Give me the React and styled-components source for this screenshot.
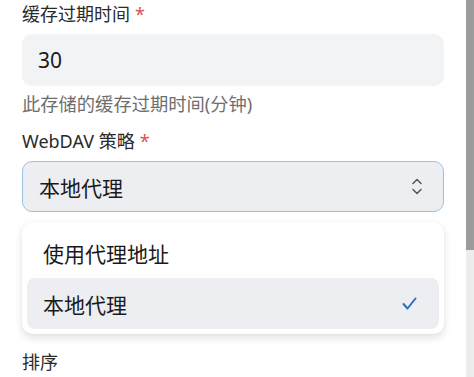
import styled, { createGlobalStyle } from "styled-components";

const GlobalStyle = createGlobalStyle`
  html, body {
    margin: 0;
    padding: 0;
    background: #ffffff;
    overflow: hidden;
  }
  body {
    font-family: "Noto Sans", "Noto Sans CJK SC", sans-serif;
    color: #1f1f1f;
  }
`;

const Page = styled.div`
  display: flex;
  width: 474px;
  height: 377px;
  overflow: hidden;
`;

const Main = styled.div`
  flex: 1;
  display: flex;
  flex-direction: column;
  padding: 2px 22px 0 22px;
`;

const Scrollbar = styled.div`
  width: 8px;
  display: flex;
  flex-direction: column;
  background: #ededed;
`;

const Thumb = styled.div`
  height: 250px;
  background: #9b9b9b;
`;

const Label = styled.div`
  font-size: 18px;
  line-height: 24px;
  color: #2a2a2a;
  margin-top: ${(p) => p.$mt || 0}px;
`;

const Star = styled.span`
  color: #d9534f;
  margin-left: 5px;
`;

const Input = styled.div`
  margin-top: 8px;
  height: 52px;
  box-sizing: border-box;
  display: flex;
  align-items: center;
  padding: 0 16px;
  border-radius: 10px;
  background: #f2f3f5;
  font-size: 21px;
  color: #1a1a1a;
`;

const Help = styled.div`
  margin-top: 6px;
  font-size: 18.3px;
  line-height: 24px;
  color: #6e6e6e;
`;

const Select = styled.div`
  margin-top: 8px;
  height: 51px;
  box-sizing: border-box;
  display: flex;
  align-items: center;
  justify-content: space-between;
  padding: 0 20px 0 16px;
  border-radius: 10px;
  border: 1.5px solid #9cc2e2;
  background: #eceef1;
  font-size: 21px;
  color: #1a1a1a;
`;

const Menu = styled.div`
  margin-top: 10px;
  padding: 5px;
  border-radius: 10px;
  background: #ffffff;
  box-shadow: 0 4px 8px rgba(0, 0, 0, 0.12), 0 0 1px rgba(0, 0, 0, 0.1);
  display: flex;
  flex-direction: column;
`;

const Option = styled.div`
  height: 51px;
  display: flex;
  align-items: center;
  justify-content: space-between;
  padding: 0 22px 0 16px;
  border-radius: 8px;
  font-size: 21px;
  color: #1a1a1a;
  background: ${(p) => (p.$active ? "#eceef1" : "transparent")};
`;

const ChevronsIcon = () => (
  <svg width="12" height="17" viewBox="0 0 12 17" fill="none" stroke="#555" strokeWidth="1.5" strokeLinecap="round" strokeLinejoin="round">
    <path d="M2 5.5 6 1.5 10 5.5" />
    <path d="M2 11.5 6 15.5 10 11.5" />
  </svg>
);

const CheckIcon = () => (
  <svg width="15" height="13" viewBox="0 0 15 13" fill="none" stroke="#2f6fb8" strokeWidth="2" strokeLinecap="round" strokeLinejoin="round">
    <path d="M1.5 7 5.5 11.5 13.5 1.5" />
  </svg>
);

export default function App() {
  const options = ["使用代理地址", "本地代理"];
  const selected = "本地代理";

  return (
    <Page>
      <GlobalStyle />
      <Main>
        <Label>
          缓存过期时间<Star>*</Star>
        </Label>
        <Input>30</Input>
        <Help>此存储的缓存过期时间(分钟)</Help>

        <Label $mt={13}>
          WebDAV 策略<Star>*</Star>
        </Label>
        <Select>
          {selected}
          <ChevronsIcon />
        </Select>
        <Menu>
          {options.map((o) => (
            <Option key={o} $active={o === selected}>
              {o}
              {o === selected && <CheckIcon />}
            </Option>
          ))}
        </Menu>

        <Label $mt={16}>排序</Label>
      </Main>
      <Scrollbar>
        <Thumb />
      </Scrollbar>
    </Page>
  );
}
